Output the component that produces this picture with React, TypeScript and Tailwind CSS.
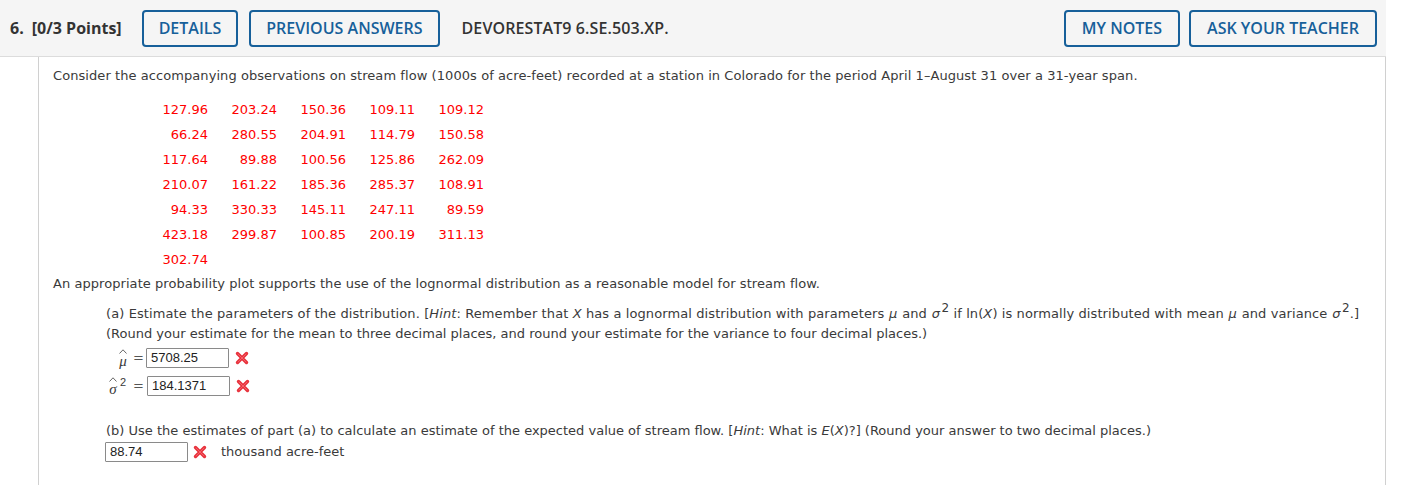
import React from 'react'

const rows: string[][] = [
    ['127.96', '203.24', '150.36', '109.11', '109.12'],
    ['66.24', '280.55', '204.91', '114.79', '150.58'],
    ['117.64', '89.88', '100.56', '125.86', '262.09'],
    ['210.07', '161.22', '185.36', '285.37', '108.91'],
    ['94.33', '330.33', '145.11', '247.11', '89.59'],
    ['423.18', '299.87', '100.85', '200.19', '311.13'],
    ['302.74'],
]

function HeaderButton({ children, wide = false }: { children: React.ReactNode; wide?: boolean }) {
    return (
        <button className={`h-[37px] ${wide ? 'px-[16px]' : 'px-[15px]'} rounded-[4px] border-2 border-[#17609a] text-[#17609a] text-[16px] font-semibold bg-transparent`}>
            {children}
        </button>
    )
}

function WrongMark() {
    return (
        <svg width="14" height="14" viewBox="0 0 14 14" className="shrink-0">
            <path d="M2.5 2.5 L11.5 11.5 M11.5 2.5 L2.5 11.5" stroke="#e8323c" strokeWidth="3.4" strokeLinecap="round" />
            <path d="M3 3 L11 11 M11 3 L3 11" stroke="#f4606a" strokeWidth="1" strokeLinecap="round" />
        </svg>
    )
}

function AnswerBox({ value }: { value: string }) {
    return (
        <div className="h-[20px] w-[83px] border border-[#8a8a8a] rounded-[1px] bg-white pl-[4px] flex items-center font-['Liberation_Sans',Arial,sans-serif] text-[13px] text-[#222]">
            {value}
        </div>
    )
}

// letra grega em itálico
const Greek = ({ children }: { children: React.ReactNode }) => <i className="mx-[0.5px]">{children}</i>

const Sup = ({ children }: { children: React.ReactNode }) => (
    <sup className="text-[12px] leading-none ml-[1px]">{children}</sup>
)

// letra com acento circunflexo (estimador)
function Hat({ children }: { children: React.ReactNode }) {
    return (
        <span className="inline-flex flex-col items-center">
            <svg width="8" height="5" viewBox="0 0 8 5" className="mb-[1px]">
                <path d="M0.5 4.5 L4 0.8 L7.5 4.5" fill="none" stroke="#555" strokeWidth="0.9" />
            </svg>
            <span className="font-['Liberation_Serif','Times_New_Roman',serif] italic text-[15px] leading-[13px]">{children}</span>
        </span>
    )
}

export default function App() {
    return (
        <div className="w-[1386px] bg-white font-['DejaVu_Sans',Verdana,sans-serif] text-[13px] text-[#3a3a3a]">
            {/* Cabeçalho da questão */}
            <div className="h-[57px] bg-[#f5f5f5] border-b border-[#dcdcdc] flex items-center pl-[10px] pr-[9px] font-['Open_Sans',sans-serif] text-[#333]">
                <span className="text-[16px] font-bold">6.</span>
                <span className="text-[16px] font-bold ml-[8px]">[0/3 Points]</span>
                <div className="ml-[20px] flex gap-[11px]">
                    <HeaderButton>DETAILS</HeaderButton>
                    <HeaderButton>PREVIOUS ANSWERS</HeaderButton>
                </div>
                <span className="ml-[22px] text-[16px] font-semibold tracking-[0.1px]">DEVORESTAT9 6.SE.503.XP.</span>
                <div className="ml-auto flex gap-[9px]">
                    <HeaderButton wide>MY NOTES</HeaderButton>
                    <HeaderButton wide>ASK YOUR TEACHER</HeaderButton>
                </div>
            </div>

            {/* Corpo */}
            <div className="ml-[38px] h-[428px] border-l border-r border-[#d0d0d0] pl-[14px] pt-[10px]">
                <p className="leading-[18px] tracking-[0.07px]">
                    Consider the accompanying observations on stream flow (1000s of acre-feet) recorded at a station in Colorado for the period April 1–August 31 over a 31-year span.
                </p>

                <table className="mt-[12px] ml-[86px] text-[#ff0000]">
                    <tbody>
                        {rows.map((r, i) => (
                            <tr key={i} className="h-[25px]">
                                {r.map((v, j) => (
                                    <td key={j} className="w-[69px] text-right p-0">{v}</td>
                                ))}
                            </tr>
                        ))}
                    </tbody>
                </table>

                <p className="mt-[3px] leading-[18px] tracking-[0.06px]">
                    An appropriate probability plot supports the use of the lognormal distribution as a reasonable model for stream flow.
                </p>

                <div className="ml-[53px]">
                    <p className="mt-[11px] leading-[20px]">
                        <span className="tracking-[0.1px]">
                            (a) Estimate the parameters of the distribution. [<i>Hint</i>: Remember that <i>X</i> has a lognormal distribution with parameters <Greek>μ</Greek> and <Greek>σ</Greek><Sup>2</Sup> if ln(<i>X</i>) is normally distributed with mean <Greek>μ</Greek> and variance <Greek>σ</Greek><Sup>2</Sup>.]
                        </span>
                        <br />
                        (Round your estimate for the mean to three decimal places, and round your estimate for the variance to four decimal places.)
                    </p>

                    <div className="mt-[4px] flex items-center h-[20px]">
                        <span className="w-[21px] flex justify-end items-end"><Hat>μ</Hat></span>
                        <span className="w-[19px] pl-[6px] text-[#555]">=</span>
                        <AnswerBox value="5708.25" />
                        <span className="ml-[6px]"><WrongMark /></span>
                    </div>
                    <div className="mt-[8px] flex items-center h-[20px]">
                        <span className="w-[20px] flex justify-end items-start">
                            <Hat>σ</Hat>
                            <span className="text-[11px] leading-none ml-[3px] font-['Liberation_Sans',Arial,sans-serif]">2</span>
                        </span>
                        <span className="w-[21px] pl-[7px] text-[#555]">=</span>
                        <AnswerBox value="184.1371" />
                        <span className="ml-[6px]"><WrongMark /></span>
                    </div>

                    <p className="mt-[25px] leading-[20px]">
                        (b) Use the estimates of part (a) to calculate an estimate of the expected value of stream flow. [<i>Hint</i>: What is <i>E</i>(<i>X</i>)?] (Round your answer to two decimal places.)
                    </p>
                    <div className="mt-[1px] flex items-center h-[20px] -ml-[1px]">
                        <AnswerBox value="88.74" />
                        <span className="ml-[5px]"><WrongMark /></span>
                        <span className="ml-[14px]">thousand acre-feet</span>
                    </div>
                </div>
            </div>
        </div>
    )
}
